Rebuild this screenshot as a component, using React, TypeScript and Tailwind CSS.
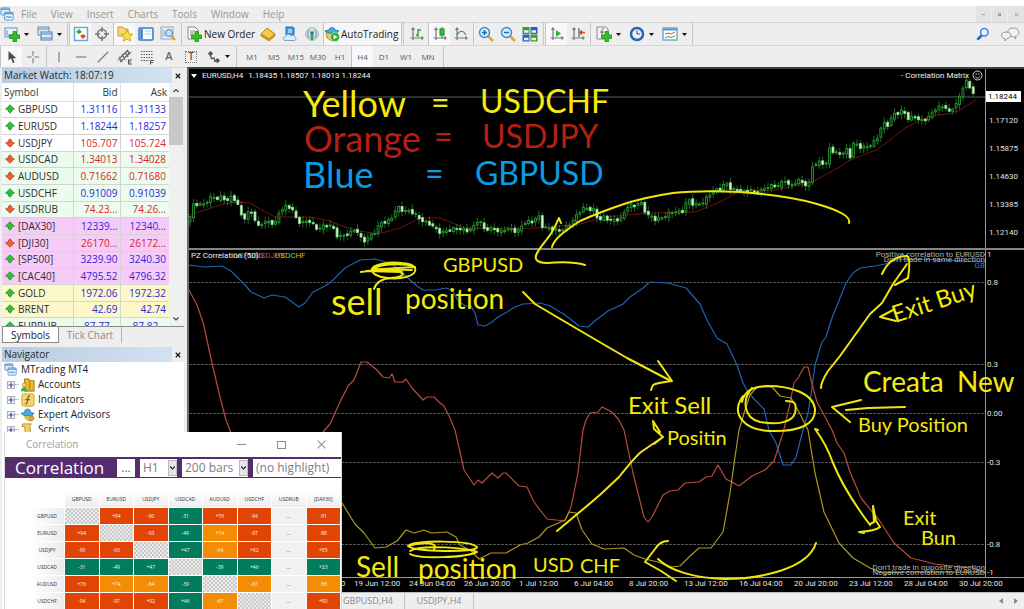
import React, { useState } from 'react';
import clsx from 'clsx';

type Point = [number, number];

/* ---------- data ---------- */

const menuItems = ['File', 'View', 'Insert', 'Charts', 'Tools', 'Window', 'Help'];
const timeframes = ['M1', 'M5', 'M15', 'M30', 'H1', 'H4', 'D1', 'W1', 'MN'];

const quotes = [
  { symbol: 'GBPUSD', bid: '1.31116', ask: '1.31133', up: true, blue: true, bg: 'bg-white' },
  { symbol: 'EURUSD', bid: '1.18244', ask: '1.18257', up: true, blue: true, bg: 'bg-white' },
  { symbol: 'USDJPY', bid: '105.707', ask: '105.724', up: false, blue: false, bg: 'bg-white' },
  { symbol: 'USDCAD', bid: '1.34013', ask: '1.34028', up: false, blue: false, bg: 'bg-[#ebfbee]' },
  { symbol: 'AUDUSD', bid: '0.71662', ask: '0.71680', up: false, blue: false, bg: 'bg-[#ebfbee]' },
  { symbol: 'USDCHF', bid: '0.91009', ask: '0.91039', up: true, blue: true, bg: 'bg-[#ebfbee]' },
  { symbol: 'USDRUB', bid: '74.23...', ask: '74.26...', up: false, blue: false, bg: 'bg-[#ebfbee]' },
  { symbol: '[DAX30]', bid: '12339...', ask: '12340...', up: true, blue: true, bg: 'bg-[#f7cbf7]' },
  { symbol: '[DJI30]', bid: '26170...', ask: '26172...', up: false, blue: false, bg: 'bg-[#f7cbf7]' },
  { symbol: '[SP500]', bid: '3239.90', ask: '3240.30', up: true, blue: true, bg: 'bg-[#f7cbf7]' },
  { symbol: '[CAC40]', bid: '4795.52', ask: '4796.32', up: true, blue: true, bg: 'bg-[#f7cbf7]' },
  { symbol: 'GOLD', bid: '1972.06', ask: '1972.32', up: true, blue: true, bg: 'bg-[#fcf8ca]' },
  { symbol: 'BRENT', bid: '42.69', ask: '42.74', up: true, blue: true, bg: 'bg-[#fcf8ca]' },
  { symbol: 'EURRUB', bid: '87.77...', ask: '87.82...', up: true, blue: true, bg: 'bg-[#ebfbee]' },
];

const matrixSymbols = ['GBPUSD', 'EURUSD', 'USDJPY', 'USDCAD', 'AUDUSD', 'USDCHF', 'USDRUB', '[DAX30]'];
const matrixRows = [
  { symbol: 'GBPUSD', values: ['', '+94', '-90', '-31', '+76', '-94', '...', '-91'] },
  { symbol: 'EURUSD', values: ['+94', '', '-93', '-49', '+74', '-97', '...', '-88'] },
  { symbol: 'USDJPY', values: ['-90', '-93', '', '+47', '-64', '+92', '...', '+85'] },
  { symbol: 'USDCAD', values: ['-31', '-49', '+47', '', '-39', '+46', '...', '+23'] },
  { symbol: 'AUDUSD', values: ['+76', '+74', '-64', '-39', '', '-67', '...', '-56'] },
  { symbol: 'USDCHF', values: ['-94', '-97', '+92', '+46', '-67', '', '...', '+90'] },
];

const timeLabels = [
  '16 Jun 20:00', '19 Jun 12:00', '24 Jun 04:00', '26 Jun 20:00', '1 Jul 12:00', '6 Jul 04:00', '8 Jul 20:00',
  '13 Jul 12:00', '16 Jul 04:00', '20 Jul 20:00', '23 Jul 12:00', '28 Jul 04:00', '30 Jul 20:00',
];

const pricePath: Point[] = [
  [189, 222], [192, 206], [195, 204], [203, 205], [207, 201], [212, 197], [217, 199], [222, 197],
  [228, 201], [232, 196], [237, 202], [240, 214], [245, 218], [250, 210], [254, 216], [257, 228],
  [263, 222], [270, 222], [275, 224], [280, 210], [287, 206], [293, 210], [297, 222], [305, 222],
  [310, 221], [316, 229], [325, 226], [331, 225], [338, 237], [345, 235], [352, 232], [356, 228],
  [360, 238], [365, 241], [370, 236], [376, 231], [380, 223], [390, 221], [397, 207], [404, 211],
  [411, 211], [418, 218], [425, 222], [432, 225], [438, 232], [445, 232], [452, 229], [460, 229],
  [466, 231], [473, 228], [479, 218], [483, 229], [495, 229], [500, 233], [507, 228], [515, 231],
  [520, 231], [523, 222], [532, 222], [538, 215], [543, 228], [552, 229], [560, 231], [567, 227],
  [575, 218], [582, 208], [595, 210], [598, 221], [603, 217], [612, 221], [622, 218], [627, 206],
  [635, 206], [640, 201], [646, 213], [650, 217], [657, 220], [665, 216], [672, 212], [682, 212],
  [688, 199], [694, 205], [703, 203], [712, 191], [720, 189], [726, 183], [732, 190], [740, 190],
  [745, 192], [750, 189], [755, 194], [762, 190], [770, 186], [778, 186], [785, 180], [790, 187],
  [798, 180], [806, 185], [810, 183], [812, 166], [820, 162], [827, 164], [829, 148], [835, 153],
  [841, 154], [848, 149], [851, 160], [853, 143], [860, 147], [868, 147], [873, 143], [878, 137],
  [881, 127], [885, 123], [889, 126], [892, 115], [898, 113], [904, 110], [906, 119], [915, 117],
  [921, 121], [926, 119], [931, 115], [936, 108], [945, 106], [950, 114], [953, 107], [959, 100],
  [962, 88], [967, 80], [970, 89], [974, 93], [978, 97],
];

const averageLine =
  '189,215 205,210 220,205 235,202 250,203 262,210 275,217 310,217 330,221 345,227 360,231 378,234 400,228 420,218 440,218 465,228 500,229 540,228 580,224 605,217 650,213 695,212 720,202 740,191 775,190 810,183 840,167 850,160 876,150 890,140 905,128 920,120 938,115 955,113 976,100';

const gbpusdLine =
  '189,265 205,267 222,266 231,271 245,285 251,292 264,298 272,295 285,297 299,307 305,303 313,292 325,286 332,281 345,268 360,260 375,259 386,262 398,268 410,280 417,286 423,290 435,290 446,288 452,290 459,302 466,306 471,306 475,313 478,325 485,326 492,322 498,317 507,312 515,307 523,304 540,303 550,306 565,315 579,326 588,327 596,320 608,311 623,304 630,297 643,288 650,282 667,283 675,285 686,288 700,304 707,320 717,338 727,344 737,365 743,383 748,392 754,399 764,409 769,430 776,443 783,465 791,465 796,457 803,430 808,413 811,395 815,365 822,342 826,337 832,318 846,283 853,273 860,268 875,266 885,264 895,260 920,259 985,262';
const usdjpyLine =
  '189,290 197,305 203,322 212,363 220,397 226,420 231,433 250,480 290,486 323,432 330,424 340,402 348,386 354,380 361,362 367,362 377,370 383,377 389,378 392,374 395,382 403,382 406,379 412,388 423,400 427,397 434,397 440,403 444,406 450,418 455,430 464,470 474,485 478,480 482,483 492,473 498,478 503,473 506,473 519,486 527,487 534,502 547,519 565,521 571,507 578,473 583,430 586,420 590,413 598,412 602,407 612,412 619,420 624,430 633,473 639,497 644,517 648,522 652,517 663,495 670,491 678,490 685,483 699,482 706,477 712,476 718,465 726,479 739,486 752,476 765,470 774,461 783,433 789,408 794,383 798,378 804,367 808,367 813,388 817,402 823,413 832,430 837,443 844,453 850,472 861,498 879,520 894,543 911,558 935,564 960,567 973,568 984,572';
const usdchfLine =
  '189,460 260,510 300,470 342,503 355,524 364,533 375,548 386,547 397,541 406,530 414,533 424,530 431,533 447,532 456,537 460,545 471,551 479,559 491,553 506,553 520,545 528,543 539,537 547,528 565,520 569,512 576,513 582,530 592,544 604,549 624,548 634,555 645,559 658,562 671,567 680,566 689,557 699,548 711,548 723,532 730,493 735,457 739,430 745,410 750,395 757,387 772,387 780,396 791,398 800,414 808,430 815,473 824,512 839,543 853,558 870,568 883,573 907,572 985,572';

// hand notes on top of both panels
const notes = [
  { text: 'Yellow', x: 303, y: 103, look: 'text-[36px] text-[#f4ea0c]' },
  { text: '=', x: 431, y: 102, look: 'text-[32px] text-[#f4ea0c]' },
  { text: 'USDCHF', x: 480, y: 101, look: 'text-[32px] text-[#f4ea0c]' },
  { text: 'Orange', x: 304, y: 138, look: 'text-[36px] text-[#b51f12]' },
  { text: '=', x: 434, y: 136, look: 'text-[32px] text-[#b51f12]' },
  { text: 'USDJPY', x: 482, y: 136, look: 'text-[32px] text-[#b51f12]' },
  { text: 'Blue', x: 303, y: 174, look: 'text-[36px] text-[#0c9be0]' },
  { text: '=', x: 425, y: 173, look: 'text-[32px] text-[#0c9be0]' },
  { text: 'GBPUSD', x: 475, y: 173, look: 'text-[32px] text-[#0c9be0]' },
  { text: 'GBPUSD', x: 443, y: 264, look: 'text-[20px] text-[#f4ea0c]' },
  { text: 'sell', x: 331, y: 301, look: 'text-[36px] text-[#f4ea0c]' },
  { text: 'position', x: 405, y: 298, look: 'text-[28px] text-[#f4ea0c]' },
  { text: 'Exit Sell', x: 628, y: 405, look: 'text-[24px] text-[#f4ea0c]' },
  { text: 'Positin', x: 667, y: 437, look: 'text-[20px] text-[#f4ea0c]' },
  { text: 'Exit Buy', x: 890, y: 301, look: 'text-[24px] text-[#f4ea0c] -rotate-[18deg]' },
  { text: 'Creata', x: 863, y: 381, look: 'text-[28px] text-[#f4ea0c]' },
  { text: 'New', x: 957, y: 381, look: 'text-[28px] text-[#f4ea0c]' },
  { text: 'Buy Position', x: 858, y: 424, look: 'text-[20px] text-[#f4ea0c]' },
  { text: 'Exit', x: 903, y: 517, look: 'text-[20px] text-[#f4ea0c]' },
  { text: 'Bun', x: 921, y: 537, look: 'text-[20px] text-[#f4ea0c]' },
  { text: 'Sell', x: 356, y: 566, look: 'text-[28px] text-[#f4ea0c]' },
  { text: 'position', x: 418, y: 568, look: 'text-[28px] text-[#f4ea0c]' },
  { text: 'USD', x: 533, y: 564, look: 'text-[20px] text-[#f4ea0c]' },
  { text: 'CHF', x: 580, y: 565, look: 'text-[20px] text-[#f4ea0c]' },
];

const strokes = [
  'M552,247 C554,240 560,234 580,221 Q600,212 627,203 Q647,197 673,193 Q700,190 740,192 Q790,196 817,204 Q852,214 849,223',
  'M561,223 L559,218 C556,224 553,232 547,239 C541,247 534,255 536,259 Q538,263 547,263 Q572,261 585,265',
  'M372,271 C370,263 392,262 402,263 C418,264 420,273 406,277 C394,280 375,278 372,271 C376,263 410,262 415,268',
  'M361,272 L382,269 L415,267 M366,271 L402,272 L372,269 L412,270 M374,289 Q377,279 391,278 Q402,277 403,274 L396,270',
  'M523,292 L535,304 Q577,329 627,358 L671,381 M658,361 L672,381 Q656,383 653,385 L651,390',
  'M743,396 C730,414 744,430 770,431 C800,432 816,424 815,409 C813,393 790,386 768,386 C752,386 744,391 742,402',
  'M752,388 C742,399 743,418 760,422 C776,425 792,423 795,413 C797,403 795,401 786,401',
  'M821,388 Q821,382 828,371 L840,356 L870,314 L882,303 L893,284 L907,264 M882,274 Q890,256 907,256 Q911,258 908,278 L895,285',
  'M905,407 L868,408 L846,410 M861,400 L832,407 L850,422',
  'M893,310 L880,317 L896,321',
  'M818,430 L815,429 C821,437 827,446 833,463 C840,480 855,505 870,525 M873,506 L874,522 L870,524 M873,506 L876,521 L880,527 Q875,531 859,532 L864,533',
  'M557,531 L576,515 Q592,502 602,493 L619,477 Q635,457 641,452 L663,437 M653,421 L654,429 L663,437 L654,444 M653,421 L660,432',
  'M408,546 C416,540 470,540 477,547 C478,553 415,552 408,546 C420,542 440,542 434,549',
  'M410,551 C420,544 468,548 477,552 C465,558 418,559 410,554',
  'M658,559 C670,571 695,578 724,579 C760,579 808,569 816,543 M668,541 Q660,541 655,549 L645,562 L661,571 L676,581',
];

/* ---------- small parts ---------- */

function Icon({ children, size = 16 }: { children: React.ReactNode; size?: number }) {
  return (
    <svg width={size} height={size} viewBox="0 0 16 16" fill="none" aria-hidden="true" className="shrink-0">
      {children}
    </svg>
  );
}

function Caret() {
  return (
    <svg width="5" height="3" viewBox="0 0 5 3" aria-hidden="true">
      <path d="M0 0h5L2.500 3z" fill="#111" />
    </svg>
  );
}

function Plus() {
  return <path d="M9 5.500h3.500V9H16v3.500h-3.500V16H9v-3.500H5.500V9H9z" fill="#2fc01f" stroke="#148a10" strokeWidth="0.700" />;
}

function Axes() {
  return <path d="M4 2v12M1.500 12H14M2.500 4L4 2l1.500 2M12.500 10.500L14 12l-1.500 1.500" stroke="#777" strokeWidth="1.200" />;
}

function Terminal() {
  return (
    <>
      <rect x="1" y="1" width="10" height="8" rx="1" fill="#d8ebfa" stroke="#4d8fcc" />
      <path d="M1 2.500h10" stroke="#4d8fcc" strokeWidth="1.500" />
      <rect x="5" y="6" width="10" height="9" rx="1" fill="#e6f3fc" stroke="#4d8fcc" />
      <path d="M5 7.500h10" stroke="#4d8fcc" strokeWidth="1.500" />
      <path d="M6.500 12.500l2-2 1.500 2 1.500-2 2 2" stroke="#2b74bb" />
    </>
  );
}

function Tool({
  label,
  pressed = false,
  caret = false,
  children,
}: {
  label: string;
  pressed?: boolean;
  caret?: boolean;
  children: React.ReactNode;
}) {
  return (
    <button
      type="button"
      aria-label={label}
      className={clsx(
        'flex h-full items-center justify-center',
        caret ? 'w-[33px] gap-[4px]' : 'w-[22px]',
        pressed && 'border-l border-[#c4c4c4] bg-[#f8f8f8]'
      )}
    >
      {children}
      {caret && <Caret />}
    </button>
  );
}

function Divider() {
  return <div className="mx-[1px] h-full w-px bg-[#c6c6c6]" />;
}

function MarketArrow({ up }: { up: boolean }) {
  return (
    <svg width="10" height="10" viewBox="0 0 10 10" aria-hidden="true" className="shrink-0">
      {up ? (
        <path d="M5 .8L9.500 5.200H7V7L5 9.200 3 7V5.200H.5z" fill="#2fc238" stroke="#1d8a25" strokeWidth="0.800" />
      ) : (
        <path d="M5 9.200L.5 4.800H3V3L5 .8 7 3v1.800h2.500z" fill="#f0602c" stroke="#b2401a" strokeWidth="0.800" />
      )}
    </svg>
  );
}

/* ---------- bars ---------- */

function MenuBar() {
  return (
    <header className="flex h-[23px] shrink-0 items-stretch border-t-[6px] border-b border-t-white border-b-[#d2d2d2]">
      <div className="flex items-center">
        <Icon size={14}>
          <Terminal />
        </Icon>
      </div>
      <nav className="flex flex-1 items-center text-[10px] text-[#979797]">
        {menuItems.map((item) => (
          <button key={item} type="button" className="px-[7px]">
            {item}
          </button>
        ))}
      </nav>
      <div className="flex gap-px text-[#8f98a3]">
        <button type="button" aria-label="Minimize" className="flex w-[15px] items-center justify-center bg-[#e3e3e3]">
          <span className="h-px w-[3px] bg-[#8f98a3]" />
        </button>
        <button type="button" aria-label="Restore" className="flex w-[15px] items-center justify-center bg-[#e3e3e3]">
          <span className="h-[3px] w-[3px] border border-[#8f98a3]" />
        </button>
        <button type="button" aria-label="Close" className="flex w-[16px] items-center justify-center bg-[#e3e3e3]">
          <Icon size={5}>
            <path d="M3 3l10 10M13 3L3 13" stroke="#8f98a3" strokeWidth="3" />
          </Icon>
        </button>
      </div>
    </header>
  );
}

function StandardToolbar() {
  return (
    <div className="flex h-[22px] shrink-0 items-stretch">
      <Tool label="New chart" caret>
        <Icon>
          <rect x="1" y="2" width="12" height="9" fill="#eaf4fb" stroke="#5d93bd" />
          <path d="M3 4v5h7" stroke="#5d93bd" />
          <Plus />
        </Icon>
      </Tool>
      <Tool label="Profiles" caret>
        <Icon>
          <rect x="1" y="1" width="11" height="8" fill="#dcebf7" stroke="#5d8fbd" />
          <path d="M1 3h11" stroke="#5d8fbd" />
          <rect x="4" y="6" width="11" height="8" fill="#dcebf7" stroke="#4a7fb2" />
          <path d="M4 8h11M4 12h11" stroke="#4a7fb2" />
        </Icon>
      </Tool>
      <Divider />
      <Tool label="Market watch" pressed>
        <Icon>
          <rect x="1.500" y="1.500" width="13" height="13" fill="#fff" stroke="#6aa5dc" strokeWidth="1.500" />
          <path d="M6 3l3 3-3 2-3-2z" fill="#27ad2f" />
          <path d="M10 13L7 10l3-2 3 2z" fill="#ee4f22" />
        </Icon>
      </Tool>
      <Tool label="Data window">
        <Icon>
          <circle cx="8" cy="8" r="4.500" stroke="#777" strokeWidth="1.500" />
          <path d="M8 1v5M8 10v5M1 8h5M10 8h5" stroke="#777" strokeWidth="1.500" />
        </Icon>
      </Tool>
      <Tool label="Navigator" pressed>
        <Icon>
          <path d="M1 1h5l1 2h4v7H1z" fill="#f6d774" stroke="#c89b2d" />
          <path d="M10 4l1.800 3.700 4 .6-2.900 2.800.7 4L10 13.200l-3.600 1.900.7-4-2.900-2.800 4-.6z" fill="#fbe042" stroke="#c79a17" strokeWidth="0.800" />
        </Icon>
      </Tool>
      <Tool label="Terminal">
        <Icon>
          <rect x="1" y="2" width="14" height="12" rx="1" fill="#f5faff" stroke="#3c78c3" strokeWidth="1.500" />
          <path d="M3.500 3v10" stroke="#3c78c3" strokeWidth="2.500" />
          <path d="M7 5h6M7 8h6" stroke="#b7cbe2" />
        </Icon>
      </Tool>
      <Tool label="Strategy tester">
        <Icon>
          <rect x="1" y="1" width="12" height="12" fill="#e8f0f6" stroke="#92a9bb" />
          <path d="M3 3v8M5 5v5" stroke="#92a9bb" />
          <circle cx="9" cy="7" r="3.500" fill="#bfe0fa" stroke="#4a88c0" />
          <path d="M11.500 10l3.500 4" stroke="#d5a021" strokeWidth="2" />
        </Icon>
      </Tool>
      <div className="w-[1px]" />
      <Divider />
      <button type="button" className="flex w-[74px] items-center gap-[2px] pl-[3px] text-[10px] whitespace-nowrap text-[#1c1c1c]">
        <Icon>
          <path d="M2 1h7l3 3v9H2z" fill="#fafafa" stroke="#8a8a8a" />
          <path d="M4 5h5M4 7h4M4 9h3" stroke="#8a8a8a" />
          <Plus />
        </Icon>
        New Order
      </button>
      <Tool label="MetaEditor">
        <Icon>
          <path d="M1 8l6-6 8 6-6 5z" fill="#f6c949" stroke="#b9821a" />
          <path d="M1 8v2l8 5 6-5V8l-6 5z" fill="#d99622" stroke="#b9821a" strokeWidth="0.700" />
        </Icon>
      </Tool>
      <Tool label="Virtual hosting">
        <Icon>
          <path d="M4 1h7l1 1v7H4z" fill="#3a9ae8" stroke="#1d73bd" />
          <path d="M6 4h4M6 6h4" stroke="#fff" />
          <path d="M3 14.500c-3-1-2-4 .5-4C4.500 7.500 8 8 9 9.500c3-1 4 .5 3.500 1.500 2 .5 2 3 0 3.500z" fill="#dfe9f7" stroke="#7f9dc6" />
        </Icon>
      </Tool>
      <Tool label="Signals">
        <Icon>
          <circle cx="8" cy="8" r="6.500" fill="#cfdfe0" stroke="#a9bcc2" />
          <path d="M5.500 4a5 5 0 000 8M10.500 4a5 5 0 010 8" stroke="#7c9fbb" strokeWidth="1.200" />
          <path d="M8 7v7" stroke="#2ba63c" strokeWidth="2.500" />
          <circle cx="8" cy="7" r="1.800" fill="#2b6fb6" />
        </Icon>
      </Tool>
      <button
        type="button"
        className="flex w-[79px] items-center gap-[1px] border-x border-[#c4c4c4] bg-[#f6f6f6] text-[10px] whitespace-nowrap text-[#1c1c1c]"
      >
        <Icon>
          <path d="M2 7l6-2 6 2-1 5-5 3-5-3z" fill="#f2cc3f" stroke="#be9419" />
          <path d="M1 5c2 3 12 3 14 0l-4-1c0-3-6-3-6 0z" fill="#4aaae0" stroke="#2a7eb4" />
          <circle cx="11" cy="11" r="4.500" fill="#25ad34" stroke="#fff" strokeWidth="0.500" />
          <path d="M9.500 8.500L13.500 11l-4 2.500z" fill="#fff" />
        </Icon>
        AutoTrading
      </button>
      <div className="mx-[1px] w-[2px] border-l border-dotted border-[#aaa]" />
      <Tool label="Bar chart">
        <Icon>
          <Axes />
          <path d="M9 3v8M9 4h3M7 9h2" stroke="#2a9d35" strokeWidth="1.300" />
        </Icon>
      </Tool>
      <Tool label="Candlesticks" pressed>
        <Icon>
          <Axes />
          <path d="M10 1v11" stroke="#13851d" />
          <rect x="8" y="3" width="4" height="6" fill="#2cc73a" stroke="#13851d" />
        </Icon>
      </Tool>
      <Tool label="Line chart">
        <Icon>
          <Axes />
          <path d="M4 9c3-5 6-5 9 0" stroke="#2a9d35" strokeWidth="1.200" />
        </Icon>
      </Tool>
      <Divider />
      <Tool label="Zoom in">
        <Icon>
          <path d="M10 10l5 5" stroke="#dcaa2b" strokeWidth="2.500" />
          <circle cx="6.500" cy="6.500" r="5" fill="#d7ecfa" stroke="#3f8ccd" strokeWidth="1.400" />
          <path d="M4 6.500h5M6.500 4v5" stroke="#1c6cb4" strokeWidth="1.500" />
        </Icon>
      </Tool>
      <Tool label="Zoom out">
        <Icon>
          <path d="M10 10l5 5" stroke="#dcaa2b" strokeWidth="2.500" />
          <circle cx="6.500" cy="6.500" r="5" fill="#d7ecfa" stroke="#3f8ccd" strokeWidth="1.400" />
          <path d="M4 6.500h5" stroke="#1c6cb4" strokeWidth="1.500" />
        </Icon>
      </Tool>
      <Tool label="Tile windows">
        <Icon>
          <rect x="0.500" y="1" width="7" height="7" fill="#3d9c28" />
          <rect x="8.500" y="1" width="7" height="7" fill="#2d5fc4" />
          <rect x="0.500" y="8.500" width="7" height="7" fill="#2d5fc4" />
          <rect x="8.500" y="8.500" width="7" height="7" fill="#3d9c28" />
          <path d="M2 5.500h4.500M9.500 5.500H14M2 13h4.500M9.500 13H14" stroke="#e8f2f7" strokeWidth="2.500" />
        </Icon>
      </Tool>
      <div className="w-[1px]" />
      <Divider />
      <Tool label="Auto scroll" pressed>
        <Icon>
          <Axes />
          <path d="M7 4l5 3.500L7 11z" fill="#31ad3c" />
        </Icon>
      </Tool>
      <Tool label="Chart shift">
        <Icon>
          <Axes />
          <path d="M9 2v9" stroke="#557" strokeWidth="1.200" />
          <path d="M15 6.500h-5M12 4.500l-2 2 2 2" stroke="#d4431f" strokeWidth="1.500" />
        </Icon>
      </Tool>
      <Divider />
      <Tool label="Indicators" caret>
        <Icon>
          <path d="M1 1h9l2 2v10H1z" fill="#f4f4f4" stroke="#8a8a8a" />
          <path d="M8 3c-2-1-2 1-2 3v5M4 6h4" stroke="#666" />
          <Plus />
        </Icon>
      </Tool>
      <Tool label="Periods" caret>
        <Icon>
          <circle cx="8" cy="8" r="6" fill="#e9f3fb" stroke="#2a66b5" strokeWidth="2.500" />
          <path d="M8 4.500V8h3" stroke="#444" />
        </Icon>
      </Tool>
      <Tool label="Templates" caret>
        <Icon>
          <rect x="1" y="2" width="14" height="12" fill="#fff" stroke="#5796c9" strokeWidth="1.200" />
          <path d="M1 3.500h14" stroke="#5796c9" strokeWidth="2" />
          <path d="M3 8l3-1 3 1 4-2" stroke="#cc5540" />
          <path d="M3 12l3-1.500 3 1 4-1.500" stroke="#46a34a" />
        </Icon>
      </Tool>
      <Divider />
      <div className="flex flex-1 items-center justify-end gap-[10px] pr-[4px]">
        <button type="button" aria-label="Search">
          <Icon size={14}>
            <path d="M1.500 14.500l5-5" stroke="#2e5fd0" strokeWidth="3" />
            <circle cx="9.500" cy="6" r="4.300" fill="#eef5ff" stroke="#4a7fe0" strokeWidth="1.800" />
          </Icon>
        </button>
        <button type="button" aria-label="Chat">
          <svg width="20" height="14" viewBox="0 0 20 14" aria-hidden="true">
            <path d="M13 1c7 0 8 8 2 8.500L16 12l-3-2.500C6 9 6 1 13 1z" fill="#f2f2f4" stroke="#96969c" />
            <path d="M6 5c6 0 6 6 1 6.500L5 14v-2.500C0 11 0 5 6 5z" fill="#f2f2f4" stroke="#96969c" />
          </svg>
        </button>
      </div>
    </div>
  );
}

function DrawingToolbar() {
  const [active, setActive] = useState('H4');

  return (
    <div className="flex h-[22px] shrink-0 items-stretch border-t border-[#d6d6d6]">
      <Tool label="Cursor" pressed>
        <Icon size={14}>
          <path d="M4 1v11l3-2.500L9 15l2-1-2-4.500h4z" fill="#4c4c4c" />
        </Icon>
      </Tool>
      <Tool label="Crosshair">
        <Icon size={14}>
          <path d="M8 1v5.500M8 9.500V15M1 8h5.500M9.500 8H15" stroke="#777" strokeWidth="1.200" />
        </Icon>
      </Tool>
      <div className="w-[1px]" />
      <Divider />
      <Tool label="Vertical line">
        <Icon size={14}>
          <path d="M8 2v12" stroke="#777" strokeWidth="1.300" />
        </Icon>
      </Tool>
      <Tool label="Horizontal line">
        <Icon size={14}>
          <path d="M2 8h12" stroke="#777" strokeWidth="1.300" />
        </Icon>
      </Tool>
      <Tool label="Trendline">
        <Icon size={14}>
          <path d="M2 14L14 2" stroke="#777" strokeWidth="1.300" />
        </Icon>
      </Tool>
      <Tool label="Equidistant channel">
        <Icon>
          <path d="M1 11L11 1M3 13L14 3M2 8l3 5M5 5l3 6M8 3l3 5M11 2l1 4" stroke="#666" strokeWidth="1.300" />
          <path d="M11 11h4M11 13h3M11 15h4M11.500 11v4" stroke="#555" />
        </Icon>
      </Tool>
      <Tool label="Fibonacci retracement">
        <Icon>
          <path d="M2 2.500h12M2 5.500h12M2 8.500h12M2 11.500h8" stroke="#666" strokeDasharray="1.500 1" />
          <path d="M11 11.500h4M11 13.500h3M11.500 11v4.500" stroke="#555" />
        </Icon>
      </Tool>
      <button type="button" className="w-[22px] text-[11px] font-semibold text-[#666]">
        A
      </button>
      <button type="button" className="flex w-[22px] items-center justify-center">
        <span className="flex h-[12px] w-[12px] items-center justify-center border border-dotted border-[#777] text-[10px] font-semibold text-[#555]">
          T
        </span>
      </button>
      <Tool label="Arrows" caret>
        <Icon size={14}>
          <path d="M1 4l3-3 3 3-3 3zM9 12l3-3 3 3-3 3z" fill="#555" />
          <path d="M4 6l1 4 3-1 1 4 3-1" stroke="#555" strokeWidth="1.500" />
        </Icon>
      </Tool>
      <div className="mx-[1px] w-[4px] border-l border-[#c6c6c6]" />
      {timeframes.map((tf) => (
        <button
          key={tf}
          type="button"
          onClick={() => setActive(tf)}
          className={clsx(
            'w-[22px] text-[8px] font-medium text-[#555]',
            active === tf && 'border-l border-[#c4c4c4] bg-[#f8f8f8]'
          )}
        >
          {tf}
        </button>
      ))}
      <div className="w-[3px]" />
      <Divider />
    </div>
  );
}

/* ---------- left side ---------- */

function PanelTitle({ title }: { title: string }) {
  return (
    <div className="flex h-[15px] items-center">
      <h2 className="h-full w-[170px] bg-linear-to-r from-[#b9cbdd] to-[#d2e2f2] pl-[2px] text-[10px] leading-[14px] text-[#1f2a36]">
        {title}
      </h2>
      <button type="button" aria-label={`Close ${title}`} className="ml-[3px]">
        <Icon size={6}>
          <path d="M2 2l12 12M14 2L2 14" stroke="#111" strokeWidth="3" />
        </Icon>
      </button>
    </div>
  );
}

function MarketWatch() {
  return (
    <section className="pl-[2px]">
      <PanelTitle title="Market Watch: 18:07:19" />
      <div className="flex h-[244px] overflow-hidden border-b border-[#8a8a8a]">
        <table className="h-[252px] w-[167px] table-fixed border-collapse text-[10px] leading-[14px]">
          <thead>
            <tr className="h-[18px] bg-white text-[#333]">
              <th className="w-[71px] border-r border-b border-[#e0e0e0] pl-[2px] text-left font-normal">Symbol</th>
              <th className="w-[47px] border-r border-b border-[#e0e0e0] pr-[2px] text-right font-normal">Bid</th>
              <th className="border-b border-[#e0e0e0] pr-[2px] text-right font-normal">Ask</th>
            </tr>
          </thead>
          <tbody>
            {quotes.map((q) => (
              <tr key={q.symbol} className={q.bg}>
                <td className="border-r border-b border-[#d4d4d4] pl-[3px] text-[#2d2d2d]">
                  <span className="flex items-center gap-[3px]">
                    <MarketArrow up={q.up} />
                    {q.symbol}
                  </span>
                </td>
                <td
                  className={clsx(
                    'border-r border-b border-[#d4d4d4] pr-[2px] text-right',
                    q.blue ? 'text-[#2a28dc]' : 'text-[#d8262a]'
                  )}
                >
                  {q.bid}
                </td>
                <td
                  className={clsx(
                    'border-b border-[#d4d4d4] pr-[3px] text-right',
                    q.blue ? 'text-[#2a28dc]' : 'text-[#d8262a]'
                  )}
                >
                  {q.ask}
                </td>
              </tr>
            ))}
          </tbody>
        </table>
        <div className="flex w-[14px] flex-col items-center bg-[#f0f0f0]">
          <svg width="8" height="14" viewBox="0 0 8 14" aria-hidden="true">
            <path d="M1.500 9L4 6.500 6.500 9" fill="none" stroke="#444" strokeWidth="1.200" />
          </svg>
          <div className="h-[48px] w-full bg-[#c8c8c8]" />
          <div className="flex-1" />
          <svg width="8" height="14" viewBox="0 0 8 14" aria-hidden="true">
            <path d="M1.500 5.500L4 8l2.500-2.500" fill="none" stroke="#444" strokeWidth="1.200" />
          </svg>
        </div>
      </div>
      <div className="flex h-[16px] text-[10px] leading-[14px]">
        <button type="button" className="w-[57px] border border-t-0 border-[#8a8a8a] bg-white text-[#222]">
          Symbols
        </button>
        <button type="button" className="w-[63px] border-r border-[#b5b5b5] text-[#8b8b8b]">
          Tick Chart
        </button>
      </div>
    </section>
  );
}

const treeItems = [
  {
    label: 'Accounts',
    icon: (
      <Icon size={14}>
        <path d="M4 1h5l1 2h5v12H4z" fill="#ecb92c" stroke="#9c7413" />
        <path d="M10 3v11" stroke="#9c7413" />
        <circle cx="3.500" cy="8" r="2.200" fill="#f6dc7a" stroke="#9c7413" strokeWidth="0.700" />
        <path d="M0 15c0-6 7-6 7 0z" fill="#33b530" />
      </Icon>
    ),
  },
  {
    label: 'Indicators',
    icon: (
      <Icon size={14}>
        <rect x="1" y="1" width="14" height="14" rx="2" fill="#f5d573" stroke="#c99a27" />
        <path d="M10.500 3.500c-3-1-2.500 3-3 5s-.5 4-2.500 4M5 7.500h5" stroke="#7a5a10" strokeWidth="1.300" />
      </Icon>
    ),
  },
  {
    label: 'Expert Advisors',
    icon: (
      <Icon size={14}>
        <path d="M4 7h9l1 4-4 4-5-3z" fill="#f2cc3f" stroke="#be9419" />
        <path d="M0 6c3 4 12 4 15 0l-4-1c0-5-7-5-7 0z" fill="#4aaae0" stroke="#2a7eb4" />
        <path d="M12 9l3 3-3 3-3-3z" fill="#e0b434" stroke="#9c7413" />
      </Icon>
    ),
  },
  {
    label: 'Scripts',
    icon: (
      <Icon size={14}>
        <path d="M2 1h10l-2 2 1 8h4v4H3l2-3-1-8H1z" fill="#f0cf63" stroke="#b88c25" />
      </Icon>
    ),
  },
];

function Navigator() {
  return (
    <section className="flex flex-1 flex-col pt-[4px] pl-[2px]">
      <PanelTitle title="Navigator" />
      <ul className="flex-1 bg-white text-[10px] leading-[15px] text-[#222]">
        <li className="flex h-[15px] items-center gap-[4px] pl-[2px]">
          <Icon size={13}>
            <Terminal />
          </Icon>
          MTrading MT4
        </li>
        {treeItems.map((item) => (
          <li key={item.label} className="flex h-[15px] items-center pl-[5px]">
            <button
              type="button"
              aria-label={`Expand ${item.label}`}
              className="flex h-[8px] w-[8px] items-center justify-center border border-[#b0b0b0] bg-[#f6f6f6]"
            >
              <Icon size={6}>
                <path d="M8 1v14M1 8h14" stroke="#2f4f9a" strokeWidth="3" />
              </Icon>
            </button>
            <span className="mr-[2px] w-[4px] border-t border-dotted border-[#aaa]" />
            {item.icon}
            <span className="ml-[3px]">{item.label}</span>
          </li>
        ))}
      </ul>
    </section>
  );
}

/* ---------- chart ---------- */

function priceAt(x: number) {
  for (let i = 1; i < pricePath.length; i++) {
    const [x0, y0] = pricePath[i - 1];
    const [x1, y1] = pricePath[i];
    if (x <= x1) return y0 + ((y1 - y0) * (x - x0)) / (x1 - x0);
  }
  return pricePath[pricePath.length - 1][1];
}

const STEP = 3.42;
const candles = Array.from({ length: 230 }, (_, i) => {
  const x = 190 + i * STEP;
  const wobble = Math.sin(i * 2.3) * 1.6;
  const open = priceAt(Math.max(189, x - STEP)) + wobble;
  const close = priceAt(x) - wobble;
  const wickUp = 1 + Math.abs(Math.sin(i * 5.1)) * 4;
  const wickDown = 1 + Math.abs(Math.cos(i * 3.7)) * 4;
  return { x, open, close, high: Math.min(open, close) - wickUp, low: Math.max(open, close) + wickDown };
});

function PricePanel() {
  return (
    <div className="flex min-h-0 flex-[179]">
      <div className="relative flex-1 border-r border-[#9a9a9a]">
        <svg viewBox="189 69 796 179" preserveAspectRatio="none" className="absolute inset-0 h-full w-full">
          <path d="M189 97H985" stroke="#56616b" />
          <polyline points={averageLine} fill="none" stroke="#6e1414" />
          {candles.map((c) => (
            <g key={c.x}>
              <path d={`M${c.x} ${c.high}V${c.low}`} stroke="#1f8a2a" strokeWidth="0.800" />
              <rect
                x={c.x - 1}
                y={Math.min(c.open, c.close)}
                width="2"
                height={Math.max(1, Math.abs(c.close - c.open))}
                fill={c.close > c.open + 1 ? '#d6f7d2' : '#031a05'}
                stroke={c.close > c.open + 1 ? '#8fd890' : '#2aa336'}
                strokeWidth="0.800"
              />
            </g>
          ))}
        </svg>
        <div className="relative flex h-[13px] items-center justify-between px-[2px] text-[8px] text-[#f2f2f2]">
          <span className="flex items-center gap-[5px]">
            <svg width="6" height="4" viewBox="0 0 6 4" aria-hidden="true">
              <path d="M0 0h6L3 4z" fill="#fff" />
            </svg>
            <span>EURUSD,H4</span>
            <span>1.18435 1.18507 1.18013 1.18244</span>
          </span>
          <span className="flex items-center gap-[3px]">
            - Correlation Matrix
            <Icon size={11}>
              <circle cx="8" cy="8" r="6.500" stroke="#e6e6e6" strokeWidth="1.300" />
              <path d="M5 9.500c1 3 5 3 6 0" stroke="#e6e6e6" strokeWidth="1.300" />
              <path d="M6 5v2M10 5v2" stroke="#e6e6e6" strokeWidth="1.500" />
            </Icon>
          </span>
        </div>
      </div>
      <div className="w-[38px] pt-[22px] text-[8px] text-[#e0e0e0]">
        <div className="h-[11px] w-[35px] bg-white pl-[2px] leading-[11px] text-black">1.18244</div>
        <ul className="pt-[5px]">
          {['1.17120', '1.15875', '1.14630', '1.13385', '1.12140'].map((p) => (
            <li key={p} className="h-[28px] pl-[3px] leading-[28px]">
              {p}
            </li>
          ))}
        </ul>
      </div>
    </div>
  );
}

const levels = [
  { label: '1', y: 255, grid: false },
  { label: '0.8', y: 283, grid: true },
  { label: '0.3', y: 365, grid: true },
  { label: '0.00', y: 414, grid: true },
  { label: '-0.3', y: 463, grid: true },
  { label: '-0.8', y: 545, grid: true },
  { label: '-1', y: 573, grid: false },
];

function CorrelationPanel() {
  return (
    <div className="flex min-h-0 flex-[327] text-[8px]">
      <div className="relative flex-1 border-r border-[#9a9a9a]">
        <svg viewBox="189 250 796 327" preserveAspectRatio="none" className="absolute inset-0 h-full w-full">
          {levels
            .filter((l) => l.grid)
            .map((l) => (
              <path key={l.label} d={`M189 ${l.y - 0.5}H985`} stroke="#565656" strokeDasharray="3 1" />
            ))}
          <g fill="none" strokeWidth="1.200" strokeLinejoin="round">
            <polyline points={gbpusdLine} stroke="#1f63ae" />
            <polyline points={usdjpyLine} stroke="#b84c3c" />
            <polyline points={usdchfLine} stroke="#ab981c" />
          </g>
        </svg>
        <span className="absolute top-0 left-[44px] leading-[12px] text-[#2f7fd8]">GBPUSD</span>
        <span className="absolute top-0 left-[66px] leading-[12px] text-[#c9503e]">USDJPY</span>
        <span className="absolute top-0 left-[86px] leading-[12px] text-[#c9b526]">USDCHF</span>
        <span className="absolute top-0 left-[2px] leading-[12px] text-[#f2f2f2]">PZ Correlation (50)</span>
        <span className="absolute top-0 right-0 leading-[10px] text-[#b4b4b4]">Positive correlation to EURUSD</span>
        <span className="absolute top-[5px] right-0 leading-[10px] text-[#b4b4b4]">Don't trade in same direction</span>
        <span className="absolute top-[10px] right-0 leading-[12px] text-[#2f7fd8]">GB</span>
        <span className="absolute right-0 bottom-[4px] leading-[10px] text-[#b4b4b4]">Don't trade in opposite direction</span>
        <span className="absolute right-0 -bottom-px leading-[10px] text-[#b4b4b4]">Negative correlation to EURUSD</span>
      </div>
      <div className="relative w-[38px] text-[#e0e0e0]">
        {levels.map((l) => (
          <span
            key={l.label}
            className="absolute left-[1px] -translate-y-1/2 leading-[10px]"
            style={{ top: `${((l.y - 250) / 327) * 100}%` }}
          >
            {l.label}
          </span>
        ))}
      </div>
    </div>
  );
}

function Notes() {
  return (
    <div className="pointer-events-none absolute inset-0">
      <svg viewBox="189 69 835 508" preserveAspectRatio="none" className="absolute inset-0 h-full w-full overflow-visible">
        <g fill="none" stroke="#f0e60e" strokeWidth="2" strokeLinecap="round" strokeLinejoin="round">
          {strokes.map((d) => (
            <path key={d} d={d} />
          ))}
        </g>
      </svg>
      {notes.map((n) => (
        <span
          key={`${n.text}-${n.x}-${n.y}`}
          className={clsx("absolute -translate-y-1/2 font-['Lato'] leading-none whitespace-nowrap", n.look)}
          style={{ left: `${((n.x - 189) / 835) * 100}%`, top: `${((n.y - 69) / 508) * 100}%` }}
        >
          {n.text}
        </span>
      ))}
    </div>
  );
}

function ChartWindow() {
  return (
    <main className="flex min-w-0 flex-1 flex-col">
      <div className="flex min-h-0 flex-1 flex-col border-t-2 border-l-2 border-t-[#3c3f40] border-l-[#6e6e6e] bg-black font-['Roboto','Open_Sans',sans-serif]">
        <div className="relative flex min-h-0 flex-1 flex-col">
          <PricePanel />
          <div className="h-[2px] shrink-0 bg-[#858585]" />
          <CorrelationPanel />
          <Notes />
        </div>
        <div className="flex h-[15px] shrink-0 overflow-hidden border-t border-[#9a9a9a] pl-[110px] text-[8px] leading-[12px] whitespace-nowrap text-[#e0e0e0]">
          {timeLabels.map((t) => (
            <span key={t} className="w-[55px] shrink-0">
              {t}
            </span>
          ))}
        </div>
      </div>
      <div className="flex h-[17px] shrink-0 items-center border-t border-[#bdbdbd] bg-[#eee] pl-[147px] text-[9px] text-[#8a8a8a]">
        <button type="button" className="h-full w-[71px] border-r border-[#c4c4c4] pr-[2px]">
          GBPUSD,H4
        </button>
        <button type="button" className="h-full w-[69px] border-r border-[#c4c4c4]">
          USDJPY,H4
        </button>
        <div className="flex flex-1 justify-end gap-[11px] pr-[6px]">
          <button type="button" aria-label="Scroll tabs left">
            <svg width="4" height="6" viewBox="0 0 4 6" aria-hidden="true">
              <path d="M4 0v6L0 3z" fill="#8a8a8a" />
            </svg>
          </button>
          <button type="button" aria-label="Scroll tabs right">
            <svg width="4" height="6" viewBox="0 0 4 6" aria-hidden="true">
              <path d="M0 0v6l4-3z" fill="#8a8a8a" />
            </svg>
          </button>
        </div>
      </div>
    </main>
  );
}

/* ---------- correlation window ---------- */

function cellColor(value: string) {
  if (value === '') {
    return 'bg-[repeating-conic-gradient(#c9c9c9_0_25%,#e9e9e9_0_50%)] bg-[length:4px_4px]';
  }
  if (value === '...') return 'bg-[#f1f1f1] text-[#333]';
  const strength = Math.abs(Number(value));
  if (strength >= 75) return 'bg-[#e04505] text-[#fff2e8]';
  if (strength >= 50) return 'bg-[#f58c05] text-[#fff6e2]';
  return 'bg-[#037b5d] text-[#e8fbf4]';
}

function Picker({ label, value, className, arrow = true }: { label: string; value: string; className: string; arrow?: boolean }) {
  return (
    <div className={clsx('relative h-[18px] bg-white', className)}>
      <select
        aria-label={label}
        defaultValue={value}
        className="block h-full w-full appearance-none bg-transparent pl-[3px] text-[12px] leading-[18px] text-[#7d7d85]"
      >
        <option>{value}</option>
      </select>
      {arrow && (
        <span className="pointer-events-none absolute inset-y-[1px] right-0 flex w-[9px] items-center justify-center border border-[#bcbcbc] bg-[#e6e6e6]">
          <svg width="5" height="4" viewBox="0 0 5 4" fill="none" aria-hidden="true">
            <path d="M0 .5l2.500 2.500L5 .5" stroke="#222" strokeWidth="1.200" />
          </svg>
        </span>
      )}
    </div>
  );
}

function CorrelationWindow() {
  return (
    <section className="absolute top-[432px] bottom-0 left-[4px] w-[338px] overflow-hidden border-x border-[#d9d9d9] bg-white">
      <div className="flex h-[25px] items-center justify-between pr-[15px] pl-[21px]">
        <h2 className="text-[10px] text-[#a0a0a0]">Correlation</h2>
        <div className="flex items-center gap-[31px]">
          <button type="button" aria-label="Minimize window" className="h-px w-[9px] bg-[#8c8c8c]" />
          <button type="button" aria-label="Maximize window" className="h-[8px] w-[9px] border border-[#8c8c8c]" />
          <button type="button" aria-label="Close window">
            <Icon size={9}>
              <path d="M1 1l14 14M15 1L1 15" stroke="#8c8c8c" strokeWidth="1.800" />
            </Icon>
          </button>
        </div>
      </div>
      <div className="flex h-[21px] items-center bg-[#532d6e]">
        <h1 className="w-[112px] pl-[10px] text-[17px] leading-[20px] text-white">Correlation</h1>
        <button type="button" className="h-[18px] w-[18px] bg-white text-[12px] leading-[16px] text-[#666]">
          ...
        </button>
        <Picker label="Timeframe" value="H1" className="ml-[5px] w-[37px]" />
        <Picker label="Bars" value="200 bars" className="ml-[5px] w-[66px]" />
        <Picker label="Highlight" value="(no highlight)" className="ml-[5px] flex-1" arrow={false} />
      </div>
      <table className="mt-[12px] ml-[24px] w-[312px] table-fixed border-separate border-spacing-[1px] text-center text-[5px] leading-[16px]">
        <thead>
          <tr className="text-[#333]">
            <td className="h-[15px] w-[34px] p-0" />
            {matrixSymbols.map((s) => (
              <th key={s} scope="col" className="h-[15px] bg-linear-to-b from-white to-[#ececec] p-0 font-normal">
                {s}
              </th>
            ))}
          </tr>
        </thead>
        <tbody>
          {matrixRows.map((row) => (
            <tr key={row.symbol}>
              <th scope="row" className="bg-linear-to-r from-white to-[#ececec] p-0 font-normal text-[#333]">
                {row.symbol}
              </th>
              {row.values.map((value, i) => (
                <td key={matrixSymbols[i]} className={clsx('h-[16px] p-0', cellColor(value))}>
                  {value}
                </td>
              ))}
            </tr>
          ))}
        </tbody>
      </table>
    </section>
  );
}

export default function App() {
  return (
    <div className="relative flex h-screen flex-col overflow-hidden bg-[#eee] font-['Open_Sans','Noto_Sans',sans-serif]">
      <MenuBar />
      <StandardToolbar />
      <DrawingToolbar />
      <div className="flex min-h-0 flex-1">
        <aside className="flex w-[187px] shrink-0 flex-col overflow-hidden border-t border-[#d6d6d6] pr-[3px]">
          <MarketWatch />
          <Navigator />
        </aside>
        <ChartWindow />
      </div>
      <CorrelationWindow />
    </div>
  );
}
